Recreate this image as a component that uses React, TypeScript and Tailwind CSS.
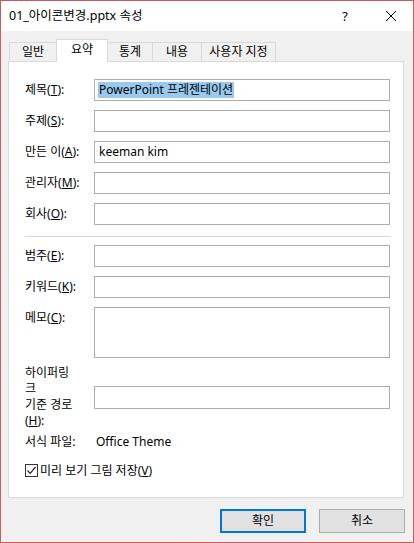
import React from 'react';

const font = "font-['Noto_Sans','Noto_Sans_CJK_KR',sans-serif]";

type FieldProps = {
  label: React.ReactNode;
  value?: React.ReactNode;
  tall?: boolean;
};

const Field: React.FC<FieldProps> = ({ label, value, tall }) => (
  <div className={`flex ${tall ? 'items-start' : 'items-center'}`}>
    <div className="w-[69px] shrink-0 h-[22px] flex items-center">{label}</div>
    <div
      className={`w-[296px] ${tall ? 'h-[51px]' : 'h-[22px]'} border border-[#acacac] bg-white flex items-center px-[3px]`}
    >
      {value}
    </div>
  </div>
);

const tabs = [
  { name: '일반', w: 'w-[48px]' },
  { name: '요약', w: 'w-[52px]', active: true },
  { name: '통계', w: 'w-[46px]' },
  { name: '내용', w: 'w-[50px]' },
  { name: '사용자 지정', w: 'w-[75px]' },
];

const App: React.FC = () => {
  return (
    <div
      className={`${font} w-[414px] h-[543px] flex flex-col border border-[#c85a5c] text-[12px] text-black leading-none`}
    >
      {/* title bar */}
      <div className="h-[30px] bg-white flex items-center pl-[8px] shrink-0">
        <span className="text-[12.5px]">01_아이콘변경.pptx 속성</span>
        <span className="ml-auto mr-[37px] text-[13px]">?</span>
        <svg width="12" height="12" viewBox="0 0 12 12" className="mr-[16px]">
          <path d="M1 1 L11 11 M11 1 L1 11" stroke="#000" strokeWidth="1" />
        </svg>
      </div>

      {/* body */}
      <div className="flex-1 bg-[#f0f0f0] flex flex-col pt-[8px]">
        <div className="flex items-end h-[23px] ml-[8px] -mb-px relative z-10">
          {tabs.map((t, i) => (
            <div
              key={t.name}
              className={`${t.w} ${i > 0 ? '-ml-px' : ''} flex items-center justify-center border-t border-l border-r border-[#d9d9d9] ${
                t.active ? 'h-[23px] bg-white pb-[2px]' : 'h-[20px] bg-[#f0f0f0] border-b'
              }`}
            >
              {t.name}
            </div>
          ))}
        </div>

        <div className="ml-[7px] w-[396px] h-[437px] bg-white border border-[#d9d9d9] pt-[17px] pl-[16px] flex flex-col">
          <div className="flex flex-col gap-[9px]">
            <Field
              label={<span>제목(<u>T</u>):</span>}
              value={<span className="bg-[#99c9ef] px-[1px] py-[2px]">PowerPoint 프레젠테이션</span>}
            />
            <Field label={<span>주제(<u>S</u>):</span>} />
            <Field label={<span>만든 이(<u>A</u>):</span>} value={<span className="pl-[1px]">keeman kim</span>} />
            <Field label={<span>관리자(<u>M</u>):</span>} />
            <Field label={<span>회사(<u>O</u>):</span>} />
          </div>

          <div className="w-[365px] h-px bg-[#d7d7d7] mt-[11px] mb-[8px]" />

          <div className="flex flex-col gap-[9px]">
            <Field label={<span>범주(<u>E</u>):</span>} />
            <Field label={<span>키워드(<u>K</u>):</span>} />
            <Field label={<span>메모(<u>C</u>):</span>} tall />
          </div>

          <div className="flex items-center mt-[7px]">
            <div className="w-[69px] shrink-0 leading-[16px]">
              하이퍼링
              <br />크
              <br />
              기준 경로
              <br />
              (<u>H</u>):
            </div>
            <div className="w-[296px] h-[23px] border border-[#acacac] bg-white" />
          </div>

          <div className="flex items-center h-[17px] mt-[4px]">
            <span className="w-[71px]">서식 파일:</span>
            <span>Office Theme</span>
          </div>

          <div className="flex items-center h-[17px] mt-[12px]">
            <div className="w-[13px] h-[13px] border border-[#333] bg-white flex items-center justify-center">
              <svg width="11" height="11" viewBox="0 0 11 11">
                <path d="M1.5 5.5 L4.2 8.3 L9.5 2" fill="none" stroke="#222" strokeWidth="1.2" />
              </svg>
            </div>
            <span className="ml-[2px]">
              미리 보기 그림 저장(<u>V</u>)
            </span>
          </div>
        </div>

        <div className="flex justify-end gap-[13px] mt-[11px] mr-[8px]">
          <button className="w-[86px] h-[24px] bg-[#e1e1e1] border-2 border-[#0078d7] flex items-center justify-center">
            확인
          </button>
          <button className="w-[86px] h-[24px] bg-[#e1e1e1] border border-[#adadad] flex items-center justify-center">
            취소
          </button>
        </div>
      </div>
    </div>
  );
};

export default App;
